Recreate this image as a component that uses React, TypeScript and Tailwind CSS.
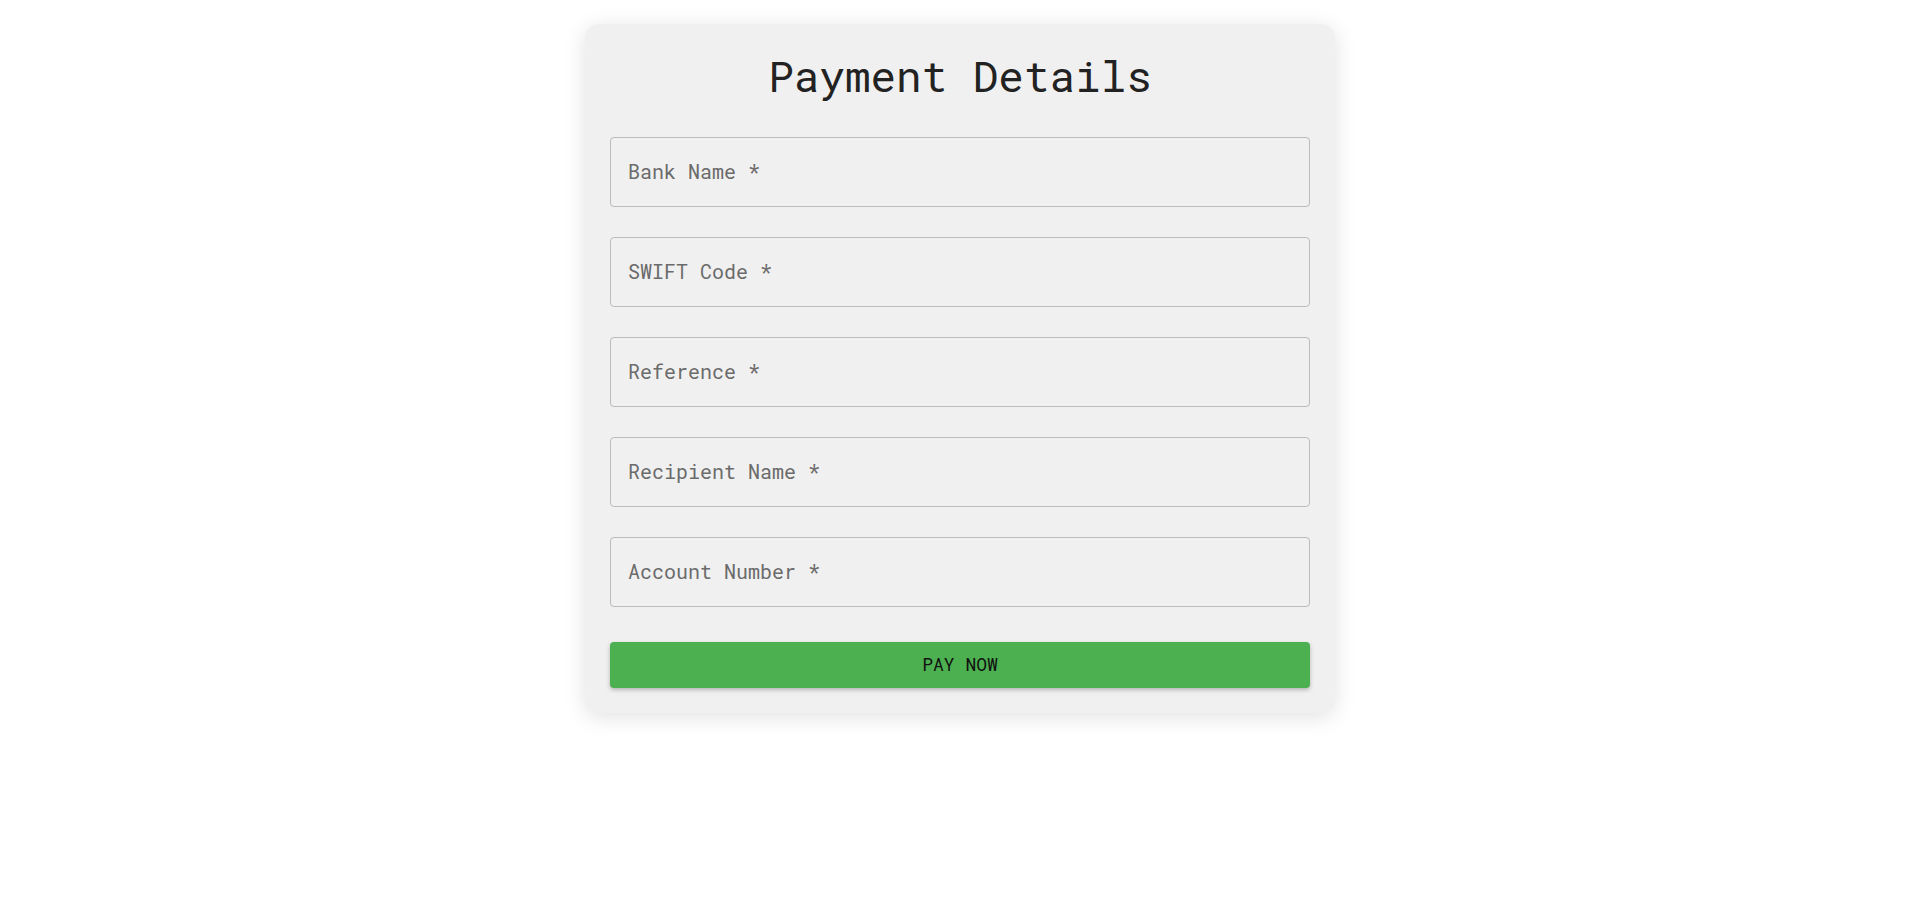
const fields = ["Bank Name *", "SWIFT Code *", "Reference *", "Recipient Name *", "Account Number *"];

export default function App() {
  return (
    <div className="min-h-screen bg-white pt-[24px] font-['Roboto_Mono','DejaVu_Sans_Mono',monospace]">
      <div className="mx-auto w-[750px] rounded-[14px] bg-[#f0f0f0] px-[25px] pt-[27px] pb-[25px] shadow-[0_4px_22px_rgba(0,0,0,0.12)]">
        <h1 className="h-[50px] text-center text-[42.6px] leading-[50px] font-normal text-[#222]">Payment Details</h1>
        <form className="mt-[36px] flex flex-col" onSubmit={(e) => e.preventDefault()}>
          {fields.map((f) => (
            <input
              key={f}
              type="text"
              placeholder={f}
              className="mb-[30px] h-[70px] w-full rounded-[4px] border border-[#bbb] bg-transparent px-[17px] pb-[2px] text-[20px] text-[#222] outline-none placeholder:text-[#6b6b6b]"
            />
          ))}
          <button
            type="submit"
            className="mt-[5px] h-[46px] w-full rounded-[4px] bg-[#4caf50] pb-[1px] text-[18px] uppercase text-[#111] shadow-[0_2px_4px_rgba(0,0,0,0.25)]"
          >
            Pay Now
          </button>
        </form>
      </div>
    </div>
  );
}
